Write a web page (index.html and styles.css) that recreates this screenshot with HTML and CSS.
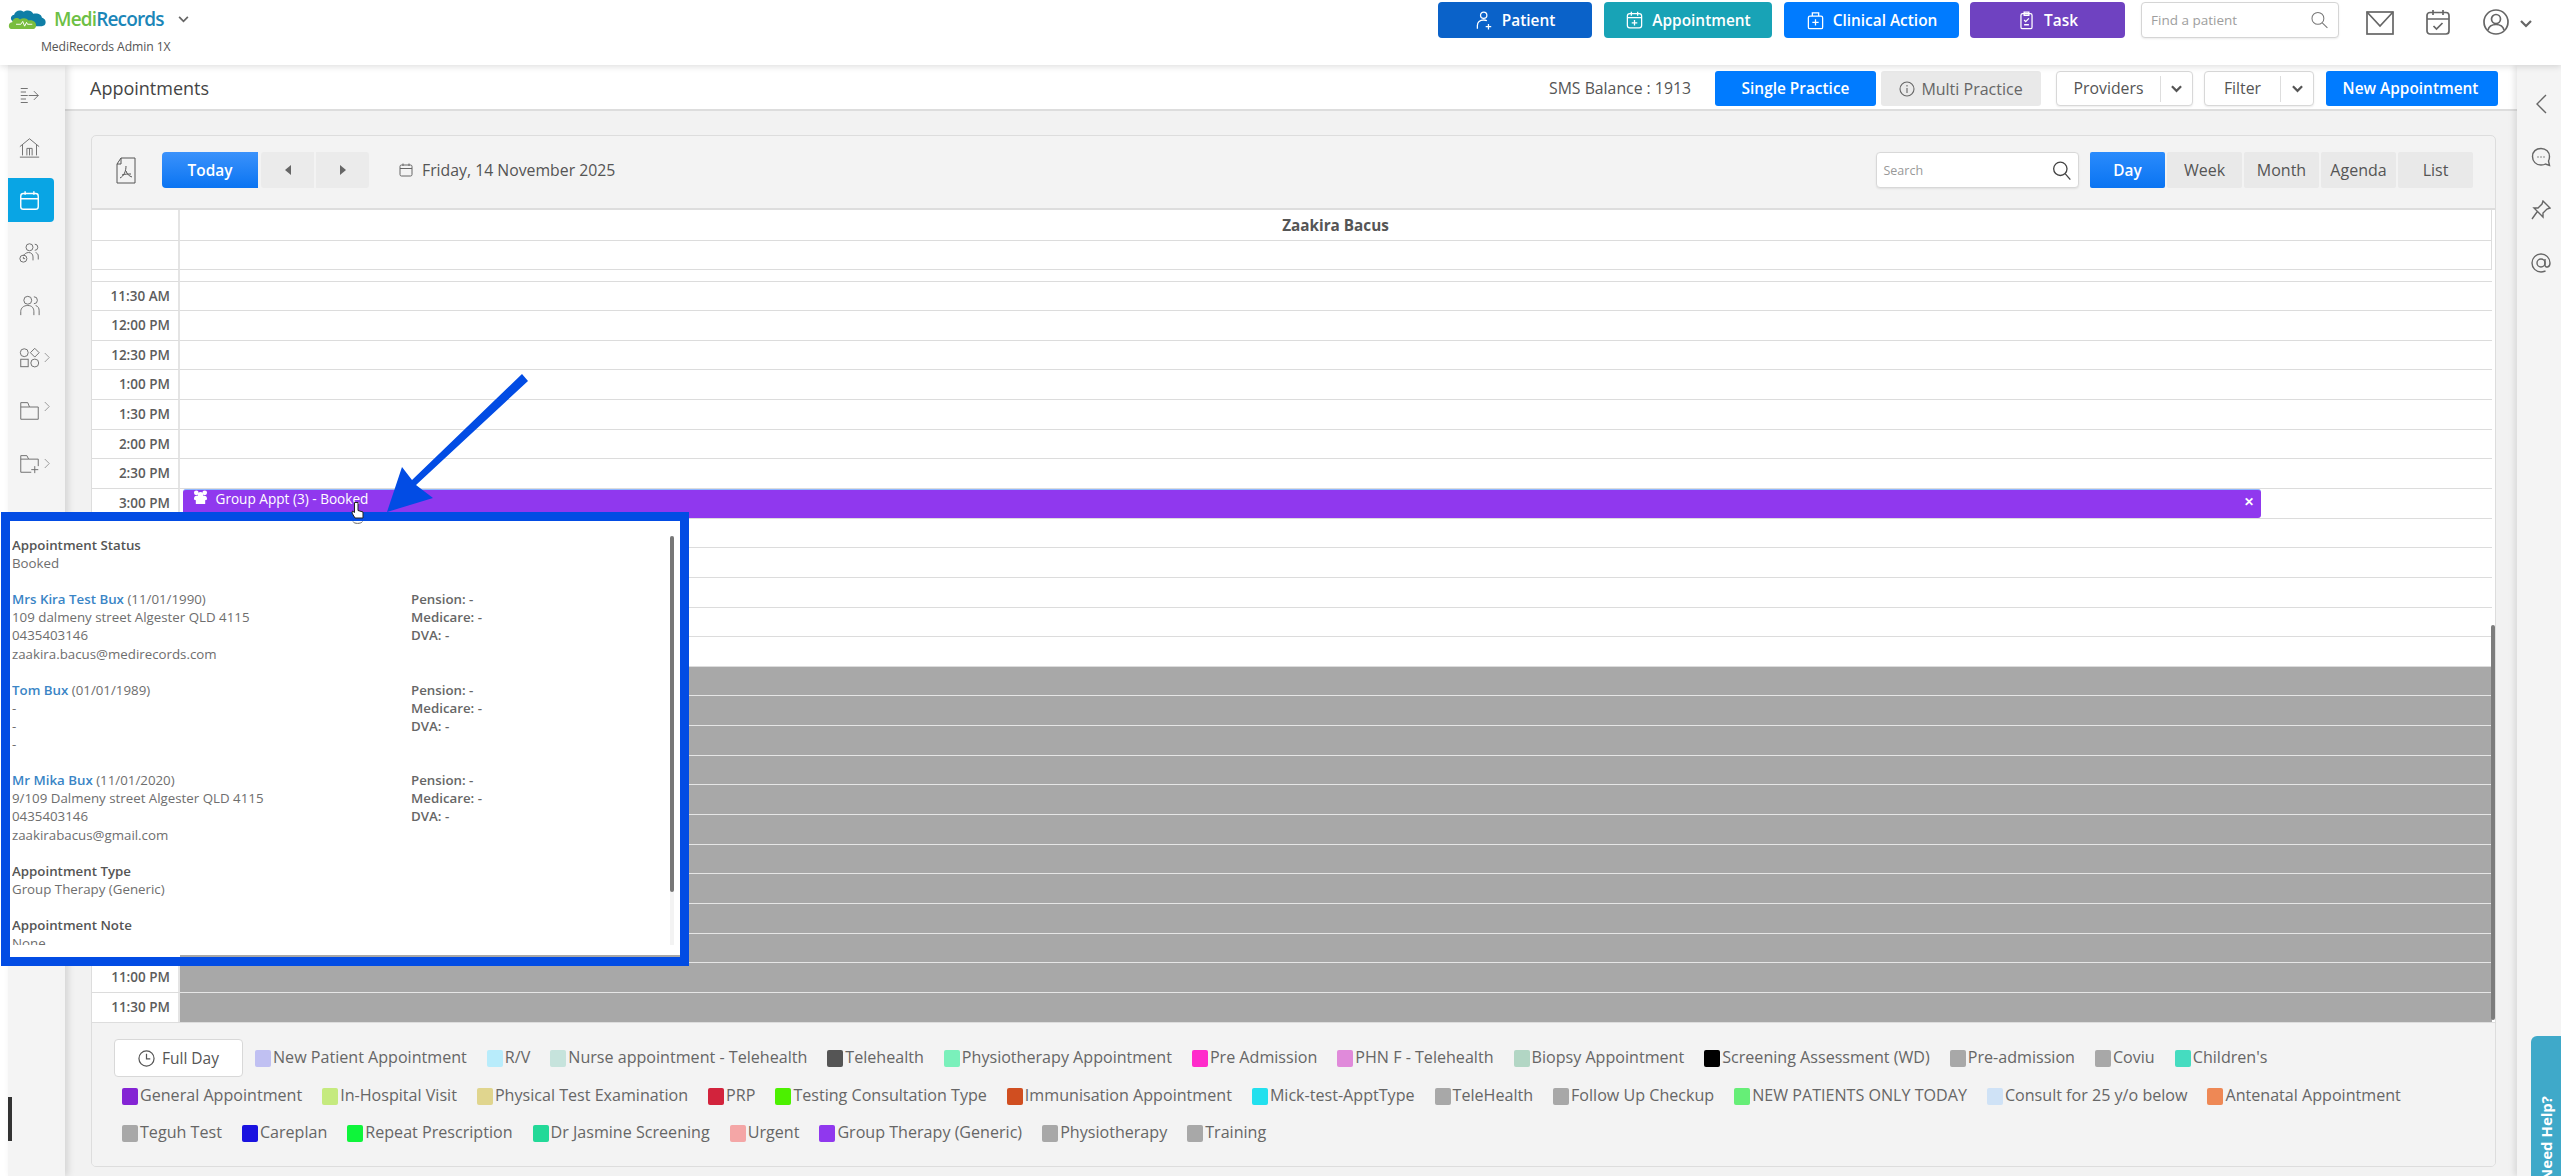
FILE: index.html
```html
<!DOCTYPE html>
<html lang="en">
<head>
<meta charset="utf-8">
<title>MediRecords - Appointments</title>
<link rel="stylesheet" href="styles.css">
</head>
<body>
<div class="app">
  <header class="topbar">
    <div class="brand">
      <div class="brand-row">
        <svg class="logo" viewBox="0 0 40 22"><path d="M6 13c-4 0-5-6 0-7 1-4 6-6 10-3 3-2 8-2 10 2 5-1 9 1 9 4 3 1 4 3 4 5 0 3-2 4-4 4H12z" fill="#0f7ea6"/><path d="M3 21c-4-1-3-7 1-7 0-4 5-6 8-3 3-2 7-2 9 1 5-1 8 2 8 5 0 2-1 4-3 4z" fill="#79bd3e"/><path d="M8 16h5l2-3 2 5 2-4 1 2h5" fill="none" stroke="#fff" stroke-width="1"/></svg>
        <span class="brand-name"><span class="medi">Medi</span><span class="records">Records</span></span>
        <svg class="brand-chev" viewBox="0 0 12 8"><path d="M1 1l5 5 5-5" fill="none" stroke="#666" stroke-width="2"/></svg>
      </div>
      <div class="brand-sub">MediRecords Admin 1X</div>
    </div>
    <nav class="quick">
      <button class="qbtn q-patient"><svg class="qicon" viewBox="0 0 24 24"><circle cx="11" cy="6" r="4"/><path d="M3 23v-4c0-4 3-7 8-7 1.500 0 3 .3 4 1"/><path d="M17 17v7M13.500 20.500h7"/></svg>Patient</button>
      <button class="qbtn q-appt"><svg class="qicon" viewBox="0 0 24 24"><rect x="3" y="4" width="18" height="18" rx="3"/><path d="M3 9h18M8 1.500v5M16 1.500v5M12 12v7M8.500 15.500h7"/></svg>Appointment</button>
      <button class="qbtn q-clin"><svg class="qicon" viewBox="0 0 24 24"><rect x="3" y="7" width="18" height="16" rx="2"/><path d="M8 7V3h8v4M12 11v8M8 15h8"/></svg>Clinical Action</button>
      <button class="qbtn q-task"><svg class="qicon" viewBox="0 0 24 24"><rect x="5" y="4" width="14" height="19" rx="2"/><path d="M9 2h6v4H9zM9 12l2 2 4-4M9 18h6"/></svg>Task</button>
      <div class="find"><span class="find-ph">Find a patient</span><svg class="find-ic" viewBox="0 0 24 24"><circle cx="10" cy="10" r="7.500"/><path d="M15.500 15.500L22 22"/></svg></div>
      <svg class="hicon mail" viewBox="0 0 28 24"><rect x="1" y="1" width="26" height="22"/><path d="M1 1l13 14L27 1"/></svg>
      <svg class="hicon calcheck" viewBox="0 0 24 26"><rect x="1" y="3.500" width="22" height="21.500" rx="3"/><path d="M1 10h22M7 1v5M17 1v5M7.500 17l3 3 6-6"/></svg>
      <svg class="hicon user" viewBox="0 0 26 26"><circle cx="13" cy="13" r="12"/><circle cx="13" cy="10" r="4.500"/><path d="M5 21c1-4 4-5.500 8-5.500s7 1.500 8 5.500"/></svg>
      <svg class="user-chev" viewBox="0 0 12 8"><path d="M1 1l5 5 5-5"/></svg>
    </nav>
  </header>

  <div class="body">
    <aside class="side">
      <div class="side-item"><svg class="sicon" viewBox="0 0 24 24"><path d="M2 4h8M2 8h6M2 12h8M2 16h6M2 20h8M11 12h11M17 7l5 5-5 5"/></svg></div>
      <div class="side-item"><svg class="sicon" viewBox="0 0 24 24"><path d="M1 11L12 2l11 9M4 9v12M20 9v12M1 23h22M9 21v-8h6v8M12 13v8"/></svg></div>
      <div class="side-item active"><svg class="sicon" viewBox="0 0 24 24"><rect x="2" y="4" width="20" height="18" rx="3"/><path d="M2 10h20M7 1.500v4M17 1.500v4"/></svg></div>
      <div class="side-item"><svg class="sicon" viewBox="0 0 24 24"><circle cx="12" cy="6" r="4"/><path d="M18 2.500a3.500 3.500 0 0 1 0 7M22 20v-4c0-2-1-3-3-4M16 21v-4c0-3-2-5-5-5-3 0-5 2-6 4"/><circle cx="5" cy="19" r="4"/><path d="M5 17v2h2"/></svg></div>
      <div class="side-item"><svg class="sicon" viewBox="0 0 24 24"><circle cx="10" cy="6" r="4.500"/><path d="M17 2a4 4 0 0 1 0 8M2 23v-4c0-4 3-7 8-7s7 3 7 7v4M23 23v-5c0-3-1-5-4-6"/></svg></div>
      <div class="side-item"><svg class="sicon" viewBox="0 0 24 24"><circle cx="6" cy="6.500" r="4.500"/><path d="M18 1.500l5 5-5 5-5-5z"/><rect x="2" y="14" width="8.500" height="8.500"/><circle cx="18" cy="18.300" r="4.500"/></svg><svg class="schev" viewBox="0 0 8 14"><path d="M1 1l6 6-6 6"/></svg></div>
      <div class="side-item"><svg class="sicon" viewBox="0 0 24 24"><path d="M2 3h8l2 5h10v14H2zM2 8h10"/></svg><svg class="schev up" viewBox="0 0 8 14"><path d="M1 1l6 6-6 6"/></svg></div>
      <div class="side-item"><svg class="sicon" viewBox="0 0 24 24"><path d="M14 22H2V3h7l2 4h11v8M2 7h9M18 15v8M14 19h8"/></svg><svg class="schev" viewBox="0 0 8 14"><path d="M1 1l6 6-6 6"/></svg></div>
      <div class="side-thumb"></div>
    </aside>

    <main class="main">
      <div class="titlebar">
        <h1 class="page-title">Appointments</h1>
        <div class="title-actions">
          <span class="sms">SMS Balance : 1913</span>
          <button class="tbtn blue single">Single Practice</button>
          <button class="tbtn grey multi"><svg class="info" viewBox="0 0 16 16"><circle cx="8" cy="8" r="7"/><path d="M8 7v5M8 4v1.500"/></svg>Multi Practice</button>
          <div class="split providers"><span class="split-label">Providers</span><span class="split-caret"><svg viewBox="0 0 12 8"><path d="M1 1l5 5 5-5"/></svg></span></div>
          <div class="split filter"><span class="split-label">Filter</span><span class="split-caret"><svg viewBox="0 0 12 8"><path d="M1 1l5 5 5-5"/></svg></span></div>
          <button class="tbtn blue newappt">New Appointment</button>
        </div>
      </div>

      <div class="content">
        <section class="card">
          <div class="toolbar">
            <svg class="pdf" viewBox="0 0 20 27"><path d="M5 1h14v25H1V7zM1 7h4V1"/><path d="M10 9c0 5-2 10-6 12M10 14c1 3 3 5 6 6M6 18c3-1 6-1 9-1"/></svg>
            <button class="today">Today</button>
            <button class="nav-btn prev" aria-label="Previous"><span class="tri-l"></span></button>
            <button class="nav-btn next" aria-label="Next"><span class="tri-r"></span></button>
            <svg class="date-ic" viewBox="0 0 14 14"><rect x="1" y="2" width="12" height="11" rx="1.500"/><path d="M1 5.500h12M4 .5v2.500M10 .5v2.500"/></svg>
            <span class="date-text">Friday, 14 November 2025</span>
            <div class="cal-search"><span class="cs-ph">Search</span><svg class="cs-ic" viewBox="0 0 24 24"><circle cx="10" cy="10" r="8"/><path d="M16 16l6 7"/></svg></div>
            <div class="views">
              <button class="view on">Day</button>
              <button class="view">Week</button>
              <button class="view">Month</button>
              <button class="view">Agenda</button>
              <button class="view">List</button>
            </div>
          </div>

          <div class="cal">
            <div class="row head"><div class="t"></div><div class="s">Zaakira Bacus</div></div>
            <div class="row allday"><div class="t"></div><div class="s"></div></div>
            <div class="row sliver"><div class="t"></div><div class="s"></div></div>
            <div class="row"><div class="t">11:30 AM</div><div class="s"></div></div>
            <div class="row"><div class="t">12:00 PM</div><div class="s"></div></div>
            <div class="row"><div class="t">12:30 PM</div><div class="s"></div></div>
            <div class="row"><div class="t">1:00 PM</div><div class="s"></div></div>
            <div class="row"><div class="t">1:30 PM</div><div class="s"></div></div>
            <div class="row"><div class="t">2:00 PM</div><div class="s"></div></div>
            <div class="row"><div class="t">2:30 PM</div><div class="s"></div></div>
            <div class="row"><div class="t">3:00 PM</div><div class="s">
              <div class="event">
                <svg class="ev-ic" viewBox="0 0 16 16"><circle cx="3.500" cy="3" r="2.500"/><circle cx="12.500" cy="3" r="2.500"/><circle cx="8" cy="5" r="3"/><path d="M1 10c0-3 1-4 3-4h8c2 0 3 1 3 4l-2 1v4H3v-4z"/></svg>
                <span class="ev-text">Group Appt (3) - Booked</span>
                <span class="ev-x">✕</span>
                <span class="ev-notch"></span>
              </div>
            </div></div>
            <div class="row"><div class="t">3:30 PM</div><div class="s"></div></div>
            <div class="row"><div class="t">4:00 PM</div><div class="s"></div></div>
            <div class="row"><div class="t">4:30 PM</div><div class="s"></div></div>
            <div class="row"><div class="t">5:00 PM</div><div class="s"></div></div>
            <div class="row"><div class="t">5:30 PM</div><div class="s"></div></div>
            <div class="row off"><div class="t">6:00 PM</div><div class="s"></div></div>
            <div class="row off"><div class="t">6:30 PM</div><div class="s"></div></div>
            <div class="row off"><div class="t">7:00 PM</div><div class="s"></div></div>
            <div class="row off"><div class="t">7:30 PM</div><div class="s"></div></div>
            <div class="row off"><div class="t">8:00 PM</div><div class="s"></div></div>
            <div class="row off"><div class="t">8:30 PM</div><div class="s"></div></div>
            <div class="row off"><div class="t">9:00 PM</div><div class="s"></div></div>
            <div class="row off"><div class="t">9:30 PM</div><div class="s"></div></div>
            <div class="row off"><div class="t">10:00 PM</div><div class="s"></div></div>
            <div class="row off"><div class="t">10:30 PM</div><div class="s"></div></div>
            <div class="row off"><div class="t">11:00 PM</div><div class="s"></div></div>
            <div class="row off last"><div class="t">11:30 PM</div><div class="s"></div></div>
            <div class="cal-thumb"></div>
          </div>

          <div class="legend">
            <div class="lrow first">
              <button class="fullday"><svg class="clock" viewBox="0 0 18 18"><circle cx="9" cy="9" r="8"/><path d="M9 4v5.500h4"/></svg>Full Day</button>
              <span class="li"><i class="sw c-new"></i>New Patient Appointment</span>
              <span class="li"><i class="sw c-rv"></i>R/V</span>
              <span class="li"><i class="sw c-nurse"></i>Nurse appointment - Telehealth</span>
              <span class="li"><i class="sw c-tele"></i>Telehealth</span>
              <span class="li"><i class="sw c-physio"></i>Physiotherapy Appointment</span>
              <span class="li"><i class="sw c-pre"></i>Pre Admission</span>
              <span class="li"><i class="sw c-phn"></i>PHN F - Telehealth</span>
              <span class="li"><i class="sw c-biopsy"></i>Biopsy Appointment</span>
              <span class="li"><i class="sw c-black"></i>Screening Assessment (WD)</span>
              <span class="li"><i class="sw c-grey"></i>Pre-admission</span>
              <span class="li"><i class="sw c-grey"></i>Coviu</span>
              <span class="li"><i class="sw c-child"></i>Children's</span>
            </div>
            <div class="lrow">
              <span class="li"><i class="sw c-gen"></i>General Appointment</span>
              <span class="li"><i class="sw c-hosp"></i>In-Hospital Visit</span>
              <span class="li"><i class="sw c-phys"></i>Physical Test Examination</span>
              <span class="li"><i class="sw c-prp"></i>PRP</span>
              <span class="li"><i class="sw c-test"></i>Testing Consultation Type</span>
              <span class="li"><i class="sw c-imm"></i>Immunisation Appointment</span>
              <span class="li"><i class="sw c-mick"></i>Mick-test-ApptType</span>
              <span class="li"><i class="sw c-grey"></i>TeleHealth</span>
              <span class="li"><i class="sw c-grey"></i>Follow Up Checkup</span>
              <span class="li"><i class="sw c-newp"></i>NEW PATIENTS ONLY TODAY</span>
              <span class="li"><i class="sw c-cons"></i>Consult for 25 y/o below</span>
              <span class="li"><i class="sw c-ante"></i>Antenatal Appointment</span>
            </div>
            <div class="lrow">
              <span class="li"><i class="sw c-grey"></i>Teguh Test</span>
              <span class="li"><i class="sw c-care"></i>Careplan</span>
              <span class="li"><i class="sw c-rep"></i>Repeat Prescription</span>
              <span class="li"><i class="sw c-jas"></i>Dr Jasmine Screening</span>
              <span class="li"><i class="sw c-urg"></i>Urgent</span>
              <span class="li"><i class="sw c-grp"></i>Group Therapy (Generic)</span>
              <span class="li"><i class="sw c-grey"></i>Physiotherapy</span>
              <span class="li"><i class="sw c-grey"></i>Training</span>
            </div>
          </div>
        </section>
      </div>
    </main>

    <aside class="rail">
      <svg class="ricon" viewBox="0 0 12 20"><path d="M11 1L2 10l9 9"/></svg>
      <svg class="ricon" viewBox="0 0 20 20"><path d="M10 1.500c5 0 8.500 3.500 8.500 8 0 2-.5 3.500-1 4.500l1 4.500-4-1.500c-1.500 1-3 1-4.500 1-5 0-8.500-3.500-8.500-8.500s3.500-8 8.500-8z"/><path d="M6.500 10h1M9.500 10h1M12.500 10h1"/></svg>
      <svg class="ricon" viewBox="0 0 20 20"><path d="M12 1l7 7-3 1-4 4 0 4-9-9 4 0 4-4zM6 12l-5 7"/></svg>
      <svg class="ricon" viewBox="0 0 20 20"><circle cx="10" cy="10" r="4"/><path d="M14 6v6c0 3 5 3 5-2 0-5-4-9-9-9s-9 4-9 9 4 9 9 9c2 0 3-.5 4.500-1"/></svg>
    </aside>
  </div>

  <div class="help">Need Help?</div>

  <div class="popup">
    <div class="pop-body">
      <div class="pgroup"><div class="plabel">Appointment Status</div><div>Booked</div></div>
      <div class="pgroup pgrid">
        <div><div><a class="plink">Mrs Kira Test Bux</a> (11/01/1990)</div><div>109 dalmeny street Algester QLD 4115</div><div>0435403146</div><div>zaakira.bacus@medirecords.com</div></div>
        <div class="pmeta"><div>Pension: -</div><div>Medicare: -</div><div>DVA: -</div></div>
      </div>
      <div class="pgroup pgrid">
        <div><div><a class="plink">Tom Bux</a> (01/01/1989)</div><div>-</div><div>-</div><div>-</div></div>
        <div class="pmeta"><div>Pension: -</div><div>Medicare: -</div><div>DVA: -</div></div>
      </div>
      <div class="pgroup pgrid">
        <div><div><a class="plink">Mr Mika Bux</a> (11/01/2020)</div><div>9/109 Dalmeny street Algester QLD 4115</div><div>0435403146</div><div>zaakirabacus@gmail.com</div></div>
        <div class="pmeta"><div>Pension: -</div><div>Medicare: -</div><div>DVA: -</div></div>
      </div>
      <div class="pgroup"><div class="plabel">Appointment Type</div><div>Group Therapy (Generic)</div></div>
      <div class="pgroup"><div class="plabel">Appointment Note</div><div>None</div></div>
    </div>
    <div class="pop-track"><div class="pop-thumb"></div></div>
  </div>

  <svg class="callout" viewBox="0 0 560 530">
    <path d="M522 374L528 381L416 485L433 498L387 512L402 467L412 480Z" fill="#024ce4"/>
  </svg>
  <svg class="cursor" viewBox="0 0 14 24"><path d="M3.500 1.500v10L1.500 10 1 12l3 5h8v-6l-5-1.500v-8z" fill="#fff" stroke="#222" stroke-width="1"/><path d="M2 20.500c1 2.500 8 2.500 9.500 0" fill="none" stroke="#666" stroke-width="1"/></svg>
</div>
</body>
</html>
```

FILE: styles.css
```css
* { box-sizing: border-box; }
html, body { margin: 0; padding: 0; height: 100%; overflow: hidden; background: #fff; }
body { font-family: "Open Sans", "Noto Sans", sans-serif; color: #555; font-size: 15px; }
button { font-family: inherit; cursor: pointer; border: 0; padding: 0; }

.app { position: relative; width: 2561px; height: 1176px; display: flex; flex-direction: column; overflow: hidden; }

/* Top bar */
.topbar { height: 65px; flex: none; display: flex; justify-content: space-between; background: #fff; position: relative; z-index: 3; box-shadow: 0 2px 6px rgba(0,0,0,.12); }
.brand { padding: 7px 0 0 8px; }
.brand-row { display: flex; align-items: center; height: 24px; }
.logo { width: 39px; height: 21px; flex: none; }
.brand-name { font-size: 19px; font-weight: 600; letter-spacing: -.85px; margin-left: 7px; line-height: 24px; }
.medi { color: #6dbf45; }
.records { color: #1c86b8; }
.brand-chev { width: 11px; height: 7px; margin-left: 14px; }
.brand-sub { margin: 8px 0 0 33px; font-size: 12.200px; color: #555; letter-spacing: -.1px; line-height: 16px; white-space: nowrap; }

.quick { display: flex; align-items: flex-start; padding: 2px 0 0 0; width: 1123px; }
.qbtn { height: 36px; border-radius: 4px; color: #fff; font-size: 15.400px; font-weight: 600; display: flex; align-items: center; justify-content: center; gap: 8px; margin-right: 12px; }
.qicon { width: 19px; height: 20px; fill: none; stroke: #fff; stroke-width: 1.600; }
.q-patient { width: 154px; background: #0a62c9; }
.q-appt { width: 168px; background: #18a3b6; }
.q-clin { width: 175px; background: #007bff; margin-right: 11px; }
.q-task { width: 155px; background: #6f42c1; margin-right: 16px; }
.find { width: 198px; height: 36px; border: 1px solid #d5d5d5; border-radius: 4px; display: flex; align-items: center; justify-content: space-between; padding: 0 9px; background: #fff; box-shadow: 0 1px 2px rgba(0,0,0,.08); }
.find-ph { font-size: 13.500px; color: #9e9e9e; }
.find-ic { width: 19px; height: 20px; fill: none; stroke: #777; stroke-width: 1.300; }
.hicon { fill: none; stroke: #666; stroke-width: 1.700; flex: none; }
.mail { width: 28px; height: 24px; margin: 9px 0 0 27px; }
.calcheck { width: 24px; height: 26px; margin: 7px 0 0 32px; }
.user { width: 26px; height: 26px; margin: 7px 0 0 33px; }
.user-chev { width: 12px; height: 8px; margin: 18px 0 0 11px; fill: none; stroke: #666; stroke-width: 2.200; flex: none; }

/* Frame */
.body { flex: 1; display: flex; min-height: 0; }
.side { width: 57px; margin-left: 8px; flex: none; background: #f4f4f4; padding-top: 8px; display: flex; flex-direction: column; gap: 8.600px; position: relative; z-index: 2; box-shadow: 3px 0 7px rgba(0,0,0,.13); }
.side-item { width: 46px; height: 44px; display: flex; align-items: center; padding-left: 11px; border-radius: 0 4px 4px 0; flex: none; }
.side-item.active { background: #09a5e4; }
.sicon { width: 21px; height: 21px; fill: none; stroke: #6e6e6e; stroke-width: 1.100; flex: none; }
.active .sicon { stroke: #fff; stroke-width: 1.600; }
.schev { width: 6px; height: 11px; margin-left: 4px; fill: none; stroke: #999; stroke-width: 1.300; flex: none; }
.schev.up { margin-top: -9px; }
.side-thumb { position: absolute; left: 0; top: 1032px; width: 4px; height: 44px; background: #333; }

.main { flex: 1; min-width: 0; display: flex; flex-direction: column; background: #f2f2f2; }
.titlebar { height: 46px; flex: none; background: #fff; border-bottom: 2px solid #ddd; display: flex; justify-content: space-between; padding: 6px 19px 0 25px; }
.page-title { margin: 0; font-size: 18px; font-weight: 400; color: #444; line-height: 36px; margin-top: -1px; }
.title-actions { display: flex; align-items: flex-start; }
.sms { font-size: 15.800px; color: #555; line-height: 34px; margin-right: 24px; white-space: nowrap; }
.tbtn { height: 35px; border-radius: 3px; font-size: 15.400px; font-weight: 600; display: flex; align-items: center; justify-content: center; }
.tbtn.blue { background: #007bff; color: #fff; }
.tbtn.grey { background: #e9e9e9; color: #666; font-weight: 400; font-size: 16px; }
.single { width: 161px; margin-right: 5px; }
.multi { width: 160px; margin-right: 15px; gap: 6px; }
.info { width: 16px; height: 16px; fill: none; stroke: #666; stroke-width: 1.100; }
.split { height: 35px; border: 1px solid #d8d8d8; border-radius: 4px; background: #fff; display: flex; align-items: center; box-shadow: 0 1px 2px rgba(0,0,0,.08); }
.providers { width: 137px; margin-right: 11px; }
.providers .split-label { width: 104px; }
.filter { width: 110px; margin-right: 12px; }
.filter .split-label { width: 76px; }
.split-label { height: 26px; line-height: 25px; text-align: center; font-size: 15.800px; color: #555; border-right: 1px solid #ddd; }
.split-caret { flex: 1; display: flex; justify-content: center; }
.split-caret svg { width: 11px; height: 8px; fill: none; stroke: #555; stroke-width: 2.400; }
.newappt { width: 172px; padding-right: 3px; }

.content { flex: 1; min-height: 0; padding: 24px 21px 9px 26px; }
.card { height: 1032px; border: 1px solid #ddd; border-radius: 5px; background: #f3f3f3; display: flex; flex-direction: column; overflow: hidden; }

.toolbar { height: 74px; flex: none; display: flex; align-items: flex-start; padding-top: 16px; position: relative; border-bottom: 2px solid #ddd; }
.pdf { width: 20px; height: 27px; margin: 5px 0 0 24px; fill: none; stroke: #555; stroke-width: 1; flex: none; }
.today { width: 96px; height: 36px; margin-left: 26px; background: linear-gradient(#3b92fb, #0a74f2); color: #fff; font-size: 15.400px; font-weight: 600; border-radius: 4px 0 0 4px; }
.nav-btn { width: 53px; height: 36px; background: #ebebeb; margin-left: 2px; display: flex; align-items: center; justify-content: center; }
.prev { margin-left: 3px; border-radius: 3px 0 0 3px; }
.next { border-radius: 0 3px 3px 0; }
.tri-l { border: 5px solid transparent; border-left: 0; border-right: 6px solid #666; }
.tri-r { border: 5px solid transparent; border-right: 0; border-left: 6px solid #666; }
.date-ic { width: 14px; height: 14px; margin: 11px 0 0 30px; fill: none; stroke: #666; stroke-width: 1; flex: none; }
.date-text { font-size: 15.800px; color: #555; margin-left: 9px; line-height: 36px; white-space: nowrap; }
.cal-search { position: absolute; left: 1783.500px; top: 16px; width: 203px; height: 36px; background: #fff; border: 1px solid #d8d8d8; border-radius: 4px; display: flex; align-items: center; justify-content: space-between; padding: 0 6px 0 7px; box-shadow: 0 1px 2px rgba(0,0,0,.08); }
.cs-ph { font-size: 12.500px; color: #999; }
.cs-ic { width: 20px; height: 21px; fill: none; stroke: #444; stroke-width: 1.600; }
.views { position: absolute; left: 1998px; top: 16px; display: flex; gap: 2px; }
.view { width: 75px; height: 36px; background: #e9e9e9; color: #555; font-size: 16px; font-weight: 400; border-radius: 2px; }
.view.on { background: linear-gradient(#2a8bfc, #0a74f2); color: #fff; font-weight: 600; font-size: 15.400px; }

/* Calendar */
.cal { position: relative; background: #fff; flex: none; display: flex; flex-direction: column; }
.row { display: flex; height: 29.650px; flex: none; }
.row .t { width: 88px; flex: none; border-right: 2px solid #e4e4e4; border-bottom: 1px solid #dcdcdc; font-size: 13.500px; font-weight: 600; color: #5c5c5c; text-align: right; padding-right: 8px; line-height: 29px; background: #fff; }
.row .s { position: relative; width: 2312px; flex: none; border-bottom: 1px solid #dcdcdc; }
.row.head { height: 31px; }
.row.head .s { text-align: center; font-size: 15.300px; font-weight: 700; color: #555; line-height: 30px; border-right: 1px solid #ddd; }
.row.allday { height: 29px; }
.row.allday .s { border-right: 1px solid #ddd; }
.row.sliver { height: 11.500px; }
.row.off .s { background: #a8a8a8; border-bottom: 1px solid #e6e6e6; }
.row.last { height: 29.150px; }
.row.last .s { border-bottom: 0; }
.row.last .t { border-bottom: 0; }
.event { position: absolute; left: 2.500px; top: 0; width: 2078px; height: 29px; background: #9038ee; border-top: 1px solid #8fb6ff; border-radius: 3px; display: flex; align-items: flex-start; color: #fff; }
.ev-ic { width: 15px; height: 15px; margin: 0 0 0 10px; fill: #fff; flex: none; }
.ev-text { margin: 0 0 0 8px; font-size: 13.600px; font-weight: 500; white-space: nowrap; line-height: 18px; }
.ev-x { margin: 4px 7px 0 auto; font-size: 12px; font-weight: 700; line-height: 16px; }
.ev-notch { position: absolute; left: 95px; bottom: 0; border: 5px solid transparent; border-top: 0; border-bottom: 5px solid #fff; }
.cal-thumb { position: absolute; right: 0; top: 415px; width: 4px; height: 395px; background: #7d7d7d; border-radius: 2px; }

/* Legend */
.legend { flex: 1; padding: 16px 0 0 22px; display: flex; flex-direction: column; background: #f3f3f3; border-top: 1px solid #ddd; }
.lrow { display: flex; align-items: center; height: 37px; padding-left: 8px; white-space: nowrap; }
.lrow.first { height: 37px; padding-left: 0; align-items: flex-start; }
.lrow.first .li { margin-top: 7px; }
.li { display: flex; align-items: center; font-size: 16.100px; color: #666; margin-right: 20px; }
.sw { display: block; width: 16px; height: 17px; border-radius: 2px; margin: 3px 2px 0 0; flex: none; }
.fullday { width: 129px; height: 38px; background: #fff; border: 1px solid #d8d8d8; border-radius: 4px; margin-right: 12px; font-size: 15.500px; font-weight: 500; color: #555; display: flex; align-items: center; justify-content: center; gap: 7px; flex: none; }
.clock { width: 17px; height: 17px; fill: none; stroke: #555; stroke-width: 1.300; }
.c-new { background: #c0c0f2; } .c-rv { background: #b8ecfb; } .c-nurse { background: #c6e3dc; }
.c-tele { background: #555; } .c-physio { background: #7af0bb; } .c-pre { background: #ff2bcb; }
.c-phn { background: #e08ada; } .c-biopsy { background: #b2d6c4; } .c-black { background: #000; }
.c-grey { background: #a8a8a8; } .c-child { background: #45dcc0; } .c-gen { background: #8424d4; }
.c-hosp { background: #c5ea7e; } .c-phys { background: #e0d58e; } .c-prp { background: #d2233c; }
.c-test { background: #4cf000; } .c-imm { background: #d04e20; } .c-mick { background: #22e0ee; }
.c-newp { background: #66ee77; } .c-cons { background: #cfe2f6; } .c-ante { background: #ee8855; }
.c-care { background: #1a12e0; } .c-rep { background: #0ef53a; } .c-jas { background: #22d998; }
.c-urg { background: #f4a6a6; } .c-grp { background: #9038ee; }

/* Right rail */
.rail { width: 44px; flex: none; background: #f4f4f4; padding: 29px 0 0 4px; display: flex; flex-direction: column; align-items: center; gap: 33px; position: relative; z-index: 2; box-shadow: -3px 0 6px rgba(0,0,0,.1); }
.ricon { width: 20px; height: 20px; fill: none; stroke: #666; stroke-width: 1.400; flex: none; }

.help { position: absolute; right: 0; bottom: 0; width: 30px; height: 140px; background: #3fa9c9; border-radius: 6px 0 0 0; z-index: 4; color: #fff; font-size: 15px; font-weight: 700; display: flex; align-items: center; justify-content: flex-start; writing-mode: sideways-lr; text-indent: -5px; overflow: hidden; }

/* Popup */
.popup { position: absolute; left: 1px; top: 512px; width: 688px; height: 454px; border: 9px solid #024ce4; background: #fff; z-index: 5; font-size: 13.300px; color: #6e6e6e; line-height: 18.100px; }
.popup::after { content: ""; position: absolute; left: 170px; right: 0; bottom: 0; height: 2px; background: #a8a8a8; }
.pop-body { position: absolute; left: 2px; top: 15px; width: 650px; height: 409px; overflow: hidden; white-space: nowrap; }
.pgroup { margin-bottom: 18.100px; }
.pgrid { display: grid; grid-template-columns: 399px 1fr; }
.plabel { font-weight: 600; color: #555; }
.plink { font-weight: 600; color: #3a85c6; }
.pmeta { font-weight: 600; color: #666; }
.pop-track { position: absolute; left: 660px; top: 15px; width: 4px; height: 409px; background: #f3f3f3; }
.pop-thumb { width: 4px; height: 356px; background: #777; border-radius: 2px; }

.callout { position: absolute; left: 0; top: 0; width: 560px; height: 530px; z-index: 6; pointer-events: none; }
.cursor { position: absolute; left: 351px; top: 501px; width: 14px; height: 24px; z-index: 7; pointer-events: none; }
```
